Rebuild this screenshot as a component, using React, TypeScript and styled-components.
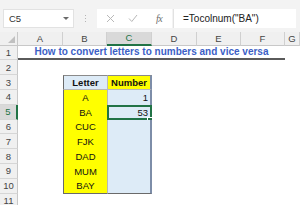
import React from "react";
import styled, { createGlobalStyle, css } from "styled-components";

const GlobalStyle = createGlobalStyle`
  html, body {
    margin: 0;
    padding: 0;
    background: #ffffff;
  }
  body {
    font-family: "Liberation Sans", Arial, sans-serif;
  }
`;

const GREEN = "#217346";
const YELLOW = "#ffff00";
const LIGHT_BLUE = "#ddebf7";

const Page = styled.div`
  width: 300px;
  height: 205px;
  overflow: hidden;
  background: #ffffff;
  display: flex;
  flex-direction: column;
`;

/* formula bar */

const FormulaBar = styled.div`
  height: 32px;
  flex: none;
  background: #f3f3f3;
  display: flex;
  align-items: flex-start;
  padding: 9px 4px 0 3px;
  box-sizing: border-box;
`;

const NameBox = styled.div`
  width: 71px;
  height: 19px;
  background: #ffffff;
  border: 1px solid #e2e2e2;
  box-sizing: border-box;
  display: flex;
  align-items: center;
  justify-content: space-between;
  padding: 0 4px 0 5px;
  font-size: 9.5px;
  color: #333333;
`;

const Caret = styled.span`
  width: 0;
  height: 0;
  border-left: 3px solid transparent;
  border-right: 3px solid transparent;
  border-top: 3px solid #6a6a6a;
`;

const Grip = styled.div`
  width: 23px;
  height: 19px;
  display: flex;
  flex-direction: column;
  align-items: center;
  justify-content: center;
  gap: 2px;

  span {
    width: 1px;
    height: 1px;
    background: #b5b5b5;
  }
`;

const IconBox = styled.div`
  width: 75px;
  height: 19px;
  background: #ffffff;
  display: flex;
  align-items: center;
  padding-left: 9px;
  box-sizing: border-box;
  gap: 13px;
`;

const Fx = styled.span`
  font-family: "Liberation Serif", "Times New Roman", serif;
  font-style: italic;
  font-size: 10px;
  color: #6d6d6d;
  margin-left: 5px;
  letter-spacing: -0.5px;
`;

const FormulaInput = styled.div`
  flex: 1;
  height: 19px;
  margin-left: 1px;
  background: #ffffff;
  border-left: 1px solid #e2e2e2;
  display: flex;
  align-items: center;
  padding-left: 9px;
  font-size: 10px;
  color: #222222;
`;

/* sheet grid */

const Sheet = styled.div`
  display: grid;
  grid-template-columns: 18px 45px 44px 45px 45px 44px 44px 1fr;
  grid-template-rows: 13.6px repeat(11, 14.8px);
`;

const ColHead = styled.div<{ $active?: boolean }>`
  background: ${({ $active }) => ($active ? "#d9d9d9" : "#f0f0f0")};
  border-right: 1px solid #d0d0d0;
  border-bottom: ${({ $active }) => ($active ? `2px solid ${GREEN}` : "1px solid #c8c8c8")};
  box-sizing: border-box;
  display: flex;
  align-items: center;
  justify-content: center;
  font-size: 9.5px;
  color: ${({ $active }) => ($active ? GREEN : "#444444")};
`;

const Corner = styled.div`
  background: #f0f0f0;
  border-right: 1px solid #c8c8c8;
  border-bottom: 1px solid #c8c8c8;
  box-sizing: border-box;
  display: flex;
  align-items: flex-end;
  justify-content: flex-end;
  padding: 0 2px 2px 0;

  &::after {
    content: "";
    width: 0;
    height: 0;
    border-left: 7px solid transparent;
    border-bottom: 7px solid #c0c0c0;
  }
`;

const RowHead = styled.div<{ $active?: boolean }>`
  background: ${({ $active }) => ($active ? "#d9d9d9" : "#f0f0f0")};
  border-right: ${({ $active }) => ($active ? `2px solid ${GREEN}` : "1px solid #c8c8c8")};
  border-bottom: 1px solid #d6d6d6;
  box-sizing: border-box;
  display: flex;
  align-items: center;
  justify-content: center;
  font-size: 9.5px;
  color: ${({ $active }) => ($active ? GREEN : "#444444")};
`;

const Title = styled.div`
  grid-column: 2 / span 6;
  border-bottom: 2px solid #5a5a5a;
  box-sizing: border-box;
  display: flex;
  align-items: center;
  justify-content: center;
  font-size: 10px;
  font-weight: bold;
  color: #3c5fc6;
  white-space: nowrap;
`;

const Cell = styled.div<{ $span?: number }>`
  ${({ $span }) => $span && css`grid-column: span ${$span};`}
`;

const TableCell = styled.div<{
  $fill: string;
  $align?: "left" | "center" | "right";
  $bold?: boolean;
  $first?: boolean;
  $last?: boolean;
  $left?: boolean;
  $right?: boolean;
  $selected?: boolean;
}>`
  position: relative;
  background: ${({ $fill }) => $fill};
  box-sizing: border-box;
  display: flex;
  align-items: center;
  justify-content: ${({ $align }) =>
    $align === "right" ? "flex-end" : $align === "left" ? "flex-start" : "center"};
  padding: 0 2px;
  font-size: 9.5px;
  font-weight: ${({ $bold }) => ($bold ? "bold" : "normal")};
  color: #111111;
  border-top: ${({ $first }) => ($first ? "1px solid #8a8a8a" : "none")};
  border-bottom: ${({ $first, $last }) =>
    $last ? "1px solid #6a6a6a" : $first ? "1px solid #b8b8b8" : "none"};
  border-left: ${({ $left }) => ($left ? "1px solid #6a6a6a" : "1px solid #b8b8b8")};
  border-right: ${({ $right }) => ($right ? "2px solid #7d8da8" : "none")};

  ${({ $selected }) =>
    $selected &&
    css`
      outline: 2px solid ${GREEN};
      outline-offset: -2px;
      &::after {
        content: "";
        position: absolute;
        right: -3px;
        bottom: -3px;
        width: 4px;
        height: 4px;
        background: ${GREEN};
        border: 1px solid #ffffff;
      }
    `}
`;

const letters = ["A", "BA", "CUC", "FJK", "DAD", "MUM", "BAY"];
const numbers: Record<number, string> = { 0: "1", 1: "53" };
const cols = ["A", "B", "C", "D", "E", "F", "G"];

function CancelIcon() {
  return (
    <svg width="9" height="9" viewBox="0 0 9 9">
      <path d="M1 1 L8 8 M8 1 L1 8" stroke="#b8b8b8" strokeWidth="1" fill="none" />
    </svg>
  );
}

function EnterIcon() {
  return (
    <svg width="10" height="9" viewBox="0 0 10 9">
      <path d="M1 4.5 L3.8 7.5 L9 1" stroke="#b8b8b8" strokeWidth="1" fill="none" />
    </svg>
  );
}

export default function App() {
  const rows: React.ReactNode[] = [];

  for (let r = 1; r <= 11; r++) {
    rows.push(
      <RowHead key={`h${r}`} $active={r === 5}>
        {r}
      </RowHead>
    );
    if (r === 1) {
      rows.push(<Title key="title">How to convert letters to numbers and vice versa</Title>);
      rows.push(<Cell key="t-g" />);
      continue;
    }
    if (r === 3) {
      rows.push(<Cell key="3a" />);
      rows.push(
        <TableCell key="3b" $fill={LIGHT_BLUE} $bold $first $left>
          Letter
        </TableCell>
      );
      rows.push(
        <TableCell key="3c" $fill={YELLOW} $bold $first $right>
          Number
        </TableCell>
      );
      rows.push(<Cell key="3d" $span={4} />);
      continue;
    }
    if (r >= 4 && r <= 10) {
      const i = r - 4;
      rows.push(<Cell key={`${r}a`} />);
      rows.push(
        <TableCell key={`${r}b`} $fill={YELLOW} $left $last={r === 10}>
          {letters[i]}
        </TableCell>
      );
      rows.push(
        <TableCell
          key={`${r}c`}
          $fill={LIGHT_BLUE}
          $align="right"
          $right
          $last={r === 10}
          $selected={r === 5}
        >
          {numbers[i] ?? ""}
        </TableCell>
      );
      rows.push(<Cell key={`${r}d`} $span={4} />);
      continue;
    }
    rows.push(<Cell key={`${r}x`} $span={7} />);
  }

  return (
    <>
      <GlobalStyle />
      <Page>
        <FormulaBar>
          <NameBox>
            C5
            <Caret />
          </NameBox>
          <Grip>
            <span />
            <span />
            <span />
          </Grip>
          <IconBox>
            <CancelIcon />
            <EnterIcon />
            <Fx>fx</Fx>
          </IconBox>
          <FormulaInput>=Tocolnum("BA")</FormulaInput>
        </FormulaBar>
        <Sheet>
          <Corner />
          {cols.map((c) => (
            <ColHead key={c} $active={c === "C"}>
              {c}
            </ColHead>
          ))}
          {rows}
        </Sheet>
      </Page>
    </>
  );
}
